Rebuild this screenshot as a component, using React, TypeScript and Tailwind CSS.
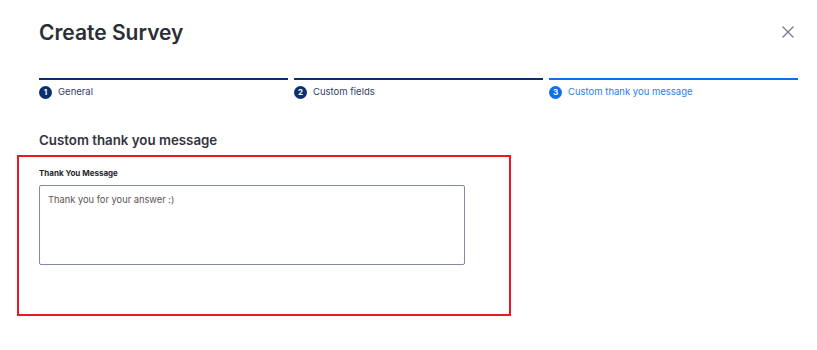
import { X } from 'lucide-react';

const steps = [
    { n: 1, label: 'General', active: false },
    { n: 2, label: 'Custom fields', active: false },
    { n: 3, label: 'Custom thank you message', active: true },
];

export default function App() {
    return (
        <div className="w-[817px] h-[350px] bg-white pl-[39px] pr-[19px] font-['Inter',sans-serif] text-[#2b2d33]">
            <div className="flex items-start justify-between pt-[19px]">
                <h1 className="text-[21px] leading-[28px] font-semibold text-[#2c2e36]">Create Survey</h1>
                <button className="mt-[3px] mr-[0px] text-[#7b8097]">
                    <X size={20} strokeWidth={1.6} />
                </button>
            </div>

            <div className="grid grid-cols-3 gap-[6px] mt-[31px]">
                {steps.map((s) => (
                    <div
                        key={s.n}
                        className={`border-t-2 pt-[5px] flex items-center gap-[6px] ${
                            s.active ? 'border-[#0f6fe8]' : 'border-[#0b2f6e]'
                        }`}
                    >
                        <span
                            className={`w-[13px] h-[13px] rounded-full text-white text-[8px] font-bold flex items-center justify-center ${
                                s.active ? 'bg-[#0f6fe8]' : 'bg-[#0b2f6e]'
                            }`}
                        >
                            {s.n}
                        </span>
                        <span className={`text-[9.5px] ${s.active ? 'text-[#2f7ce8]' : 'text-[#33406b]'}`}>
                            {s.label}
                        </span>
                    </div>
                ))}
            </div>

            <h2 className="mt-[32px] text-[13.3px] leading-[18px] font-semibold text-[#33353d]">
                Custom thank you message
            </h2>

            <div className="-ml-[22px] mt-[6px] w-[494px] h-[161px] border-2 border-[#e5191f] pl-[20px] pt-[10px]">
                <label className="block text-[8px] font-bold text-[#24262c] leading-[12px]">Thank You Message</label>
                <div className="mt-[6px] w-[426px] h-[80px] border border-[#858aa3] rounded-[2px] px-[8px] pt-[7px] text-[9.3px] text-[#5b5550]">
                    Thank you for your answer :)
                </div>
            </div>
        </div>
    );
}
